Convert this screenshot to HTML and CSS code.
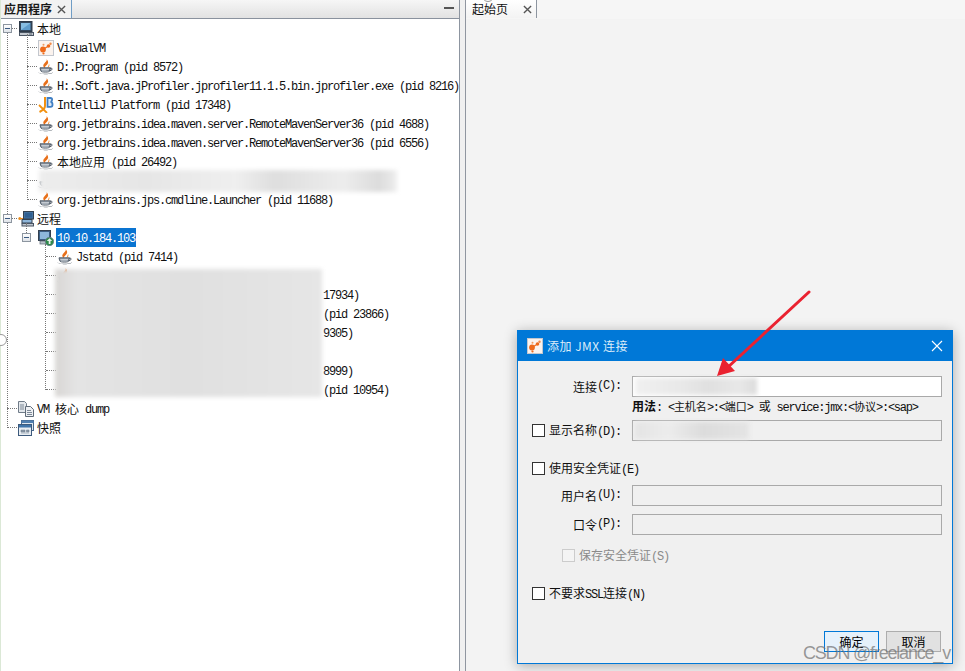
FILE: index.html
```html
<!DOCTYPE html>
<html lang="zh">
<head>
<meta charset="utf-8">
<title>VisualVM</title>
<link rel="stylesheet" href="styles.css">
</head>
<body>
<svg class="defs" width="0" height="0" aria-hidden="true">
  <symbol id="x" viewBox="0 0 10 10">
    <path d="M1 1l8 8M9 1L1 9" stroke="#555" stroke-width="1.500" fill="none"/>
  </symbol>
  <symbol id="java" viewBox="0 0 16 16">
    <path d="M8.500 0C10 2.500 5 4 5.300 7c.1.900.8 1.500 1.700 2-.4-1.200.9-2 2-3.200C10.500 4.300 10.800 2.500 8.500 0z" fill="#e8701a"/>
    <path d="M10.800 4.500c.6 1.500-1 2.500-1.300 4.500 1.400-.6 2.800-2.400 1.300-4.500z" fill="#ef8f3a"/>
    <path d="M2 8.800h10.500l-.7 2.900c-.3 1-1.700 1.400-4.500 1.400s-4.300-.4-4.600-1.400z" fill="#838e9b" stroke="#4a5460" stroke-width=".9"/>
    <path d="M3.300 10.400h7.800M3.800 12h6.800" stroke="#dfe4e9" stroke-width=".8"/>
    <path d="M12.300 9.300h1.200c1.200 0 .8 2.200-1.900 2.500" fill="none" stroke="#4a5460"/>
    <path d="M.3 13.200c2 2 12 2.200 14.700 0-.6 2.600-13.500 2.600-14.700 0z" fill="#4a5460"/>
  </symbol>
  <symbol id="vvm" viewBox="0 0 16 16">
    <rect x=".5" y=".5" width="15" height="15" fill="#fbf3ee" stroke="#c3c7ce"/>
    <circle cx="5" cy="9.500" r="2.900" fill="#ee6b1c"/>
    <circle cx="10.500" cy="6" r="1.800" fill="#ee6b1c"/>
    <circle cx="12.500" cy="3.800" r="1.200" fill="#f08a4a"/>
    <circle cx="5.500" cy="4.800" r="1" fill="#f29a5e"/>
    <circle cx="5.500" cy="13.500" r="1.100" fill="#ee6b1c"/>
    <path d="M5 9.500L10.500 6" stroke="#ee6b1c" stroke-width="1.200"/>
  </symbol>
  <symbol id="idea" viewBox="0 0 16 16">
    <path d="M7 0v9c0 2.500-2.500 4.500-5.500 6" fill="none" stroke="#f29111" stroke-width="2"/>
    <path d="M1 8l8 8" stroke="#f29111" stroke-width="1.800"/>
    <path d="M9.500 1h3c2.200 0 2.200 3.500 0 3.800 2.700.2 2.700 5 0 5h-3z" fill="#dbe7f4" stroke="#3f7fc4" stroke-width="1.800"/>
  </symbol>
  <symbol id="pc" viewBox="0 0 16 16">
    <rect x="1.500" y=".5" width="12.500" height="10" fill="#33465c" stroke="#2e3a48"/>
    <rect x="3" y="2" width="9.500" height="7" fill="#5f9ccb"/>
    <path d="M3 2h9.500L3 9z" fill="#86bde2"/>
    <rect x="1.500" y="11.500" width="14" height="3" fill="#c2c8cf" stroke="#4a5563"/>
    <rect x="11" y="12.500" width="3" height="1" fill="#5e6875"/>
  </symbol>
  <symbol id="net" viewBox="0 0 16 16">
    <rect x="5.500" y=".5" width="10" height="7.500" fill="#41709f" stroke="#334150"/>
    <rect x="7" y="2" width="7" height="4.500" fill="#2f5f91"/>
    <rect x="4" y="8.500" width="10" height="3.500" fill="#8fb6d9" stroke="#334150"/>
    <rect x="4" y="12.500" width="11.500" height="2.500" fill="#bfc6ce" stroke="#4a5563"/>
    <circle cx="1.800" cy="7.500" r="1.500" fill="#e88b1d"/>
    <path d="M3 7.500h2" stroke="#e88b1d"/>
  </symbol>
  <symbol id="host" viewBox="0 0 16 16">
    <rect x=".5" y=".5" width="12" height="10" fill="#3c5f85" stroke="#33404f"/>
    <rect x="2" y="2" width="9" height="7" fill="#8db8dc"/>
    <rect x="2" y="11" width="9" height="3" fill="#b9c1ca" stroke="#5a6572" stroke-width=".7"/>
    <circle cx="11.500" cy="11.500" r="4.200" fill="#2f8a4a" stroke="#6d7d8e" stroke-width=".8"/>
    <path d="M8.800 11h5.400l-2.700-2.700zM10.700 11h1.800v3h-1.800z" fill="#e8f2ea"/>
  </symbol>
  <symbol id="dump" viewBox="0 0 16 16">
    <path d="M.5.5h6l2 2v9h-8z" fill="#e4e8ec" stroke="#6f7b88"/>
    <path d="M7.500 5.500h5l3 3v7h-8z" fill="#eef0f3" stroke="#5f6b78"/>
    <path d="M2 4h4M2 6h4M2 8h4M9 9.500h4M9 11.500h5M9 13.500h5" stroke="#7d8997"/>
  </symbol>
  <symbol id="snap" viewBox="0 0 16 16">
    <rect x="3.500" y=".5" width="12" height="10" fill="#dfe7ef" stroke="#48688c"/>
    <rect x="3.500" y=".5" width="12" height="2.500" fill="#4f7fb0"/>
    <rect x=".5" y="4.500" width="13" height="11" fill="#e8edf2" stroke="#3d5a7c"/>
    <rect x="1" y="5" width="12" height="2.500" fill="#3f75aa"/>
    <path d="M3 10h4v2H3zM8.500 10H11v2H8.500zM3 13h8" fill="#8b98a7" stroke="#6f7d8d" stroke-width=".5"/>
  </symbol>
</svg>

<main class="workspace">
  <section class="panel panel-left">
    <header class="tabbar">
      <div class="tab tab-apps"><b class="zh">应用程序</b><svg class="tab-x"><use href="#x"/></svg></div>
      <span class="minimize"></span>
    </header>
    <div class="tree">
      <div class="group group-root">
        <div class="row l0 root"><i class="exp"></i><svg class="ic"><use href="#pc"/></svg><span class="zh">本地</span></div>
        <div class="group group-a">
          <div class="row l1"><svg class="ic"><use href="#vvm"/></svg>VisualVM</div>
          <div class="row l1"><svg class="ic"><use href="#java"/></svg>D:.Program (pid 8572)</div>
          <div class="row l1"><svg class="ic"><use href="#java"/></svg>H:.Soft.java.jProfiler.jprofiler11.1.5.bin.jprofiler.exe (pid 8216)</div>
          <div class="row l1"><svg class="ic"><use href="#idea"/></svg>IntelliJ Platform (pid 17348)</div>
          <div class="row l1"><svg class="ic"><use href="#java"/></svg>org.jetbrains.idea.maven.server.RemoteMavenServer36 (pid 4688)</div>
          <div class="row l1"><svg class="ic"><use href="#java"/></svg>org.jetbrains.idea.maven.server.RemoteMavenServer36 (pid 6556)</div>
          <div class="row l1"><svg class="ic"><use href="#java"/></svg><span class="zh">本地应用</span> (pid 26492)</div>
          <div class="row l1"><svg class="ic"><use href="#java"/></svg><div class="smudge smudge-wide"></div></div>
          <div class="row l1"><svg class="ic"><use href="#java"/></svg>org.jetbrains.jps.cmdline.Launcher (pid 11688)</div>
        </div>
        <div class="row l0"><i class="exp"></i><svg class="ic"><use href="#net"/></svg><span class="zh">远程</span></div>
        <div class="group group-b">
          <div class="row l1 noline"><i class="exp exp-1"></i><svg class="ic"><use href="#host"/></svg><span class="sel">10.10.184.103</span></div>
          <div class="group group-c">
            <div class="row l2"><svg class="ic"><use href="#java"/></svg>Jstatd (pid 7414)</div>
            <div class="row l2"><svg class="ic"><use href="#java"/></svg></div>
            <div class="row l2"><span class="tail">17934)</span></div>
            <div class="row l2"><span class="tail">(pid 23866)</span></div>
            <div class="row l2"><span class="tail">9305)</span></div>
            <div class="row l2"></div>
            <div class="row l2"><span class="tail">8999)</span></div>
            <div class="row l2"><span class="tail">(pid 10954)</span></div>
            <div class="smudge smudge-big"></div>
          </div>
        </div>
        <div class="row l0"><svg class="ic"><use href="#dump"/></svg>VM <span class="zh">核心</span> dump</div>
        <div class="row l0"><svg class="ic"><use href="#snap"/></svg><span class="zh">快照</span></div>
      </div>
    </div>
  </section>

  <div class="splitter"></div>

  <section class="panel panel-right">
    <header class="tabbar tabbar-right">
      <div class="tab tab-start"><span class="zh">起始页</span><svg class="tab-x"><use href="#x"/></svg></div>
    </header>
  </section>
</main>

<span class="ring ring-side"></span>
<span class="ring ring-top"></span>

<div class="dialog">
  <div class="titlebar">
    <svg class="ic"><use href="#vvm"/></svg>
    <span class="title">添加 JMX 连接</span>
    <span class="close"><svg width="12" height="12" viewBox="0 0 12 12"><path d="M1 1l10 10M11 1L1 11" stroke="#fff" stroke-width="1.100"/></svg></span>
  </div>
  <form class="form">
    <div class="line">
      <label class="lab"><span class="zh">连接</span>(C):</label>
      <div class="field field-on"><div class="smudge smudge-in"></div></div>
    </div>
    <div class="usage"><b class="zh">用法</b>: &lt;<span class="zs">主机名</span>&gt;:&lt;<span class="zs">端口</span>&gt; <span class="zh">或</span> service:jmx:&lt;<span class="zs">协议</span>&gt;:&lt;sap&gt;</div>
    <div class="line line-d">
      <label class="lab lab-check"><input type="checkbox" class="check"><span><span class="zh">显示名称</span>(D):</span></label>
      <div class="field"><div class="smudge smudge-in2"></div></div>
    </div>
    <div class="line line-e">
      <label class="lab lab-check"><input type="checkbox" class="check"><span><span class="zh">使用安全凭证</span>(E)</span></label>
    </div>
    <div class="line line-u">
      <label class="lab"><span class="zh">用户名</span>(U):</label>
      <div class="field"></div>
    </div>
    <div class="line line-p">
      <label class="lab"><span class="zh">口令</span>(P):</label>
      <div class="field"></div>
    </div>
    <div class="line line-s">
      <label class="lab-check lab-off"><input type="checkbox" class="check check-off" disabled><span><span class="zh">保存安全凭证</span>(S)</span></label>
    </div>
    <div class="line line-n">
      <label class="lab lab-check"><input type="checkbox" class="check"><span><span class="zh">不要求</span>SSL<span class="zh">连接</span>(N)</span></label>
    </div>
    <div class="actions">
      <button type="button" class="btn btn-main">确定</button>
      <button type="button" class="btn">取消</button>
    </div>
  </form>
</div>

<svg class="arrow" width="110" height="100" viewBox="0 0 110 100" aria-hidden="true">
  <path d="M99 3L17 79" stroke="#ea2230" stroke-width="3" stroke-linecap="round"/>
  <path d="M7 87L13 69 25 82z" fill="#ea2230"/>
</svg>
<div class="mark">CSDN @freelance_v</div>
</body>
</html>
```
FILE: styles.css
```css
* { box-sizing: border-box; }
html, body { margin: 0; padding: 0; }
body {
  position: relative;
  width: 965px;
  height: 671px;
  overflow: hidden;
  background: #f0f0f0;
  color: #101010;
  font: 12px/19px "Liberation Mono", "Noto Sans CJK SC", monospace;
  letter-spacing: -1.2px;
}
.defs { position: absolute; }
.zh, .zs {
  font-family: "Noto Sans CJK SC", sans-serif;
  letter-spacing: 0;
}
.zh { font-size: 12px; }
.zs { font-size: 11px; }
b.zh { font-weight: 700; }

.workspace { display: flex; height: 671px; }
.panel { display: flex; flex-direction: column; height: 100%; }
.panel-left {
  width: 460px;
  background: #fff;
  border-right: 1px solid #8d95a0;
  border-left: 1px solid #dbe8d6;
}
.splitter { width: 5px; background: #f0f0f0; }
.panel-right {
  flex: 1;
  background: #f3f3f3;
  border-left: 1px solid #9096a0;
}

.tabbar {
  display: flex;
  align-items: stretch;
  justify-content: space-between;
  height: 19px;
  background: linear-gradient(#f6f6f6, #e2e2e2);
  border-bottom: 1px solid #8a929e;
  padding-right: 5px;
}
.tabbar-right {
  background: #f6f6f6;
  border-bottom: 0;
}
.tab {
  display: flex;
  align-items: center;
  height: 18px;
  line-height: 18px;
}
.tab-apps {
  width: 71px;
  padding: 0 0 0 3px;
  background: #f2f2f2;
  border-right: 1px solid #6f9dc6;
}
.tab-apps b { color: #1a1a1a; }
.tab-start {
  width: 71px;
  padding-left: 6px;
  background: linear-gradient(#fff, #f3f3f3);
  border-right: 1px solid #8d95a0;
}
.tab-x {
  width: 9px;
  height: 9px;
  margin-left: auto;
  margin-right: 4px;
  flex: none;
}
.tab-apps .tab-x { margin-right: 5px; }
.minimize {
  align-self: center;
  width: 10px;
  height: 2px;
  background: #555;
  margin-top: -2px;
}

.group { position: relative; }
.group::before {
  content: "";
  position: absolute;
  border-left: 1px dotted #777;
}
.group-root::before { left: 6px; top: 9px; bottom: 9px; }
.group-a::before { left: 26px; top: -4px; bottom: 9px; }
.group-b::before { left: 25px; top: -5px; height: 10px; }
.group-c::before { left: 44px; top: -3px; bottom: 9px; }

.row {
  position: relative;
  display: flex;
  align-items: center;
  height: 19px;
  padding-top: 4px;
  white-space: pre;
}
.row::before {
  content: "";
  position: absolute;
  top: 9px;
  width: 10px;
  border-top: 1px dotted #777;
}
.l0 { padding-left: 17px; }
.l0::before { left: 6px; }
.l1 { padding-left: 37px; }
.l1::before { left: 26px; }
.l2 { padding-left: 56px; }
.l2::before { left: 45px; }
.noline::before { display: none; }
.ic { width: 16px; height: 16px; flex: none; margin-right: 3px; }
.row > .ic, .row > .zh { margin-top: -4px; }
.exp {
  position: absolute;
  left: 2px;
  top: 5px;
  width: 9px;
  height: 9px;
  background: linear-gradient(#fff, #dfe3e8);
  border: 1px solid #8d96a0;
  z-index: 1;
}
.exp::after {
  content: "";
  position: absolute;
  left: 1px;
  top: 3px;
  width: 5px;
  height: 1px;
  background: #3a5a80;
}
.exp-1 { left: 21px; }
.sel {
  height: 19px;
  margin: -4px 0 0 -1px;
  padding: 0 1px;
  background: #0a74d1;
  color: #fff;
  line-height: 22px;
}
.tail { margin-left: 266px; }

.smudge {
  position: absolute;
  filter: blur(2px);
  background: #e3e3e3;
}
.smudge-wide {
  left: 38px;
  top: -1px;
  width: 358px;
  height: 22px;
  background: linear-gradient(90deg, #ededed, #e6e6e6 30%, #efefef 55%, #dedede 66%, #ededed 85%, #dcdcdc 95%, #eee);
}
.smudge-big {
  left: 54px;
  top: 22px;
  width: 267px;
  bottom: 2px;
  background: linear-gradient(90deg, #d8d6d4, #e4e4e4 8%, #e0e0e0 50%, #e6e6e6);
}
.smudge-in {
  left: 2px;
  top: 1px;
  width: 122px;
  height: 17px;
  background: linear-gradient(90deg, #f0f0f0, #e8e8e8 40%, #e0e0e0 60%, #e8e8e8 85%, #dcdcdc);
}
.smudge-in2 {
  left: 2px;
  top: 1px;
  width: 114px;
  height: 17px;
  background: linear-gradient(90deg, #e4e4e4, #ececec 30%, #dcdcdc 60%, #e4e4e4);
}

.ring {
  position: absolute;
  width: 12px;
  height: 12px;
  border: 1px solid #999;
  border-radius: 50%;
}
.ring-side { left: -5px; top: 334px; background: #fff; }
.ring-top { left: 482px; top: -10px; }

.dialog {
  position: absolute;
  left: 517px;
  top: 330px;
  width: 436px;
  height: 334px;
  display: flex;
  flex-direction: column;
  background: #f0f0f0;
  border: 1px solid #0078d7;
  box-shadow: 0 2px 12px rgba(0, 0, 0, .3);
}
.titlebar {
  display: flex;
  align-items: center;
  height: 30px;
  flex: none;
  padding-left: 9px;
  background: #0078d7;
  color: #dcecf9;
}
.titlebar .ic { margin-right: 4px; }
.title {
  font: 12px/16px "Noto Sans CJK SC", sans-serif;
  letter-spacing: .5px;
}
.close { margin-left: auto; margin-right: 9px; display: flex; }
.form {
  flex: 1;
  display: flex;
  flex-direction: column;
  padding: 15px 10px 11px 14px;
}
.line { display: flex; align-items: center; height: 21px; flex: none; }
.lab {
  display: flex;
  align-items: center;
  justify-content: flex-end;
  width: 89px;
  margin-right: 11px;
  white-space: pre;
  flex: none;
}
.lab-check { justify-content: flex-start; display: flex; align-items: center; white-space: pre; }
.line-e .lab-check, .line-n .lab-check { width: 200px; }
.lab-off { color: #8a8a8a; margin-left: 30px; }
.check {
  appearance: none;
  width: 13px;
  height: 13px;
  margin: 0 4px 0 0;
  background: #fff;
  border: 1px solid #333;
  flex: none;
}
.check-off { border-color: #ccc; background: #f4f4f4; }
.field {
  position: relative;
  flex: 1;
  height: 21px;
  background: #f0f0f0;
  border: 1px solid #a9a9a9;
}
.field-on { background: #fff; }
.usage { margin: 2px 0 0 100px; height: 14px; line-height: 14px; white-space: pre; flex: none; letter-spacing: -1.25px; }
.line-d { margin-top: 7px; }
.line-e { margin-top: 17px; }
.line-u { margin-top: 6px; }
.line-p { margin-top: 8px; }
.line-s { margin-top: 10px; }
.line-n { margin-top: 17px; }
.actions {
  display: flex;
  justify-content: flex-end;
  gap: 7px;
  margin: auto 1px 0 0;
}
.btn {
  width: 55px;
  height: 21px;
  padding: 0;
  font: 12px/19px "Noto Sans CJK SC", sans-serif;
  color: #000;
  background: #e1e1e1;
  border: 1px solid #adadad;
}
.btn-main { background: #e5f1fb; border-color: #0078d7; }

.arrow { position: absolute; left: 710px; top: 289px; }
.mark {
  position: absolute;
  left: 803px;
  top: 643px;
  font: 18px/20px "Liberation Sans", sans-serif;
  color: rgba(110, 110, 110, .7);
}
```
